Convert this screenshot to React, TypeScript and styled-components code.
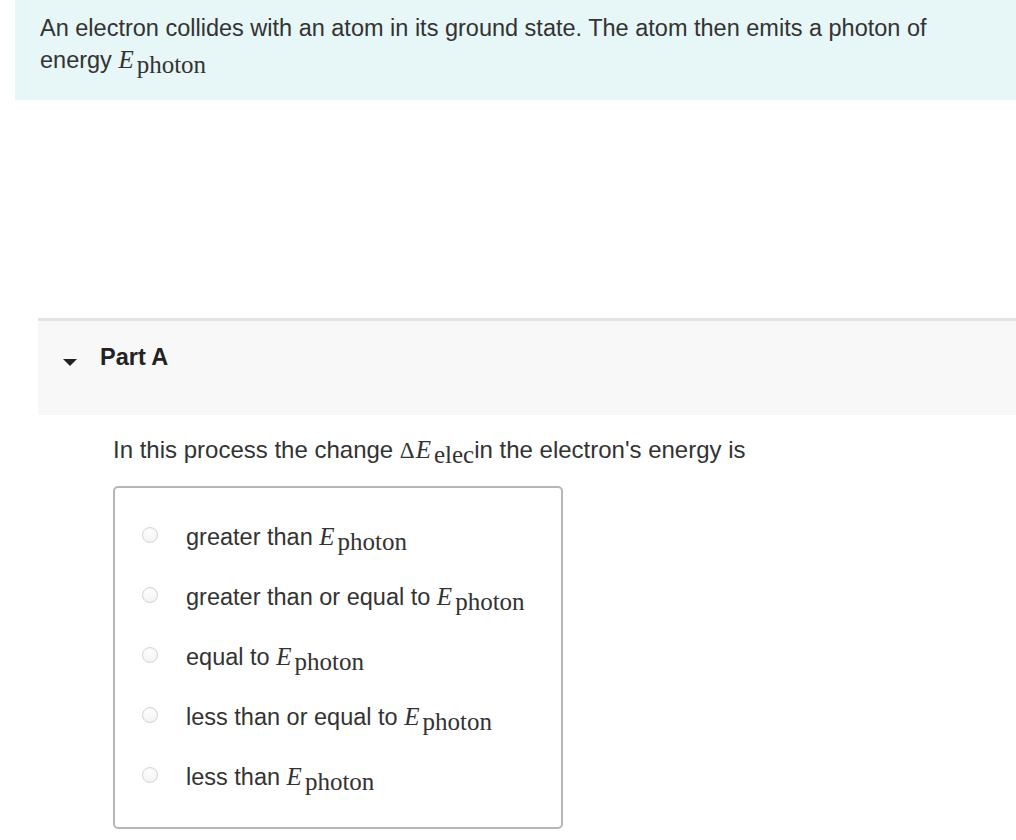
import React from 'react'
import styled, { createGlobalStyle } from 'styled-components'

const GlobalStyle = createGlobalStyle`
  html, body {
    margin: 0;
    padding: 0;
    background: #fff;
  }
  body {
    font-family: 'Liberation Sans', Arial, Helvetica, sans-serif;
    color: #333;
  }
`

function EVar({ sub }: { sub: string }) {
  return (
    <Math>
      <Italic>E</Italic>
      <Sub>{sub}</Sub>
    </Math>
  )
}

const choices = [
  'greater than',
  'greater than or equal to',
  'equal to',
  'less than or equal to',
  'less than',
]

export default function App() {
  return (
    <Page>
      <GlobalStyle />
      <Intro>
        <IntroLine>An electron collides with an atom in its ground state. The atom then emits a photon of</IntroLine>
        <IntroLine>
          energy <EVar sub="photon" />
        </IntroLine>
      </Intro>

      <Part>
        <PartHeader>
          <Caret viewBox="0 0 14 7" width="14" height="7">
            <polygon points="0,0 14,0 7,7" fill="#222" />
          </Caret>
          <PartTitle>Part A</PartTitle>
        </PartHeader>

        <PartBody>
          <Question>
            In this process the change{' '}
            <Math>
              <Upright>Δ</Upright>
              <Italic>E</Italic>
              <Sub>elec</Sub>
            </Math>
            in the electron's energy is
          </Question>

          <Choices>
            {choices.map((label) => (
              <Choice key={label}>
                <Radio />
                <ChoiceLabel>
                  {label} <EVar sub="photon" />
                </ChoiceLabel>
              </Choice>
            ))}
          </Choices>
        </PartBody>
      </Part>
    </Page>
  )
}

const Page = styled.div`
  width: 1016px;
  font-size: 23.5px;
  line-height: 31.5px;
`

const Intro = styled.div`
  margin-left: 15px;
  padding: 13px 25px 23px;
  background: #e7f6f6;
  color: #333;
`

const IntroLine = styled.div`
  white-space: nowrap;
`

const Math = styled.span`
  font-family: 'Liberation Serif', 'Times New Roman', serif;
  white-space: nowrap;
`

const Italic = styled.span`
  display: inline-block;
  font-style: italic;
  font-size: 25px;
  line-height: 1;
  margin-right: 3px;
`

const Upright = styled.span`
  font-size: 23px;
  margin-right: 1px;
`

const Sub = styled.span`
  display: inline-block;
  font-size: 25px;
  line-height: 1;
  vertical-align: -5px;
`

const Part = styled.section`
  margin-top: 218px;
  margin-left: 38px;
`

const PartHeader = styled.div`
  display: flex;
  align-items: flex-start;
  box-sizing: border-box;
  height: 97px;
  padding: 25.5px 0 0 25px;
  border-top: 3px solid #e4e4e4;
  background: #f8f8f8;
`

const Caret = styled.svg`
  display: block;
  margin-top: 12.5px;
  margin-right: 23px;
  flex-shrink: 0;
`

const PartTitle = styled.h2`
  margin: 0;
  font-size: 23.5px;
  line-height: 23.5px;
  font-weight: 700;
  color: #222;
`

const PartBody = styled.div`
  padding: 19px 0 0 75px;
`

const Question = styled.p`
  margin: 0 0 19.5px;
  font-size: 24px;
  color: #333;
`

const Choices = styled.div`
  box-sizing: border-box;
  width: 450px;
  height: 343px;
  padding: 19.5px 0;
  border: 2px solid #b6b6b6;
  border-radius: 5px;
`

const Choice = styled.label`
  display: flex;
  align-items: center;
  height: 60px;
  padding-left: 26.5px;
  cursor: pointer;
`

const Radio = styled.span`
  box-sizing: border-box;
  width: 16px;
  height: 16px;
  margin-bottom: 6px;
  margin-right: 28.5px;
  border-radius: 50%;
  border: 1px solid #d4d4d4;
  background: linear-gradient(#fff, #f3f3f3);
  box-shadow: inset 0 1px 1px rgba(0, 0, 0, 0.04);
  flex-shrink: 0;
`

const ChoiceLabel = styled.span`
  color: #333;
  white-space: nowrap;
`
